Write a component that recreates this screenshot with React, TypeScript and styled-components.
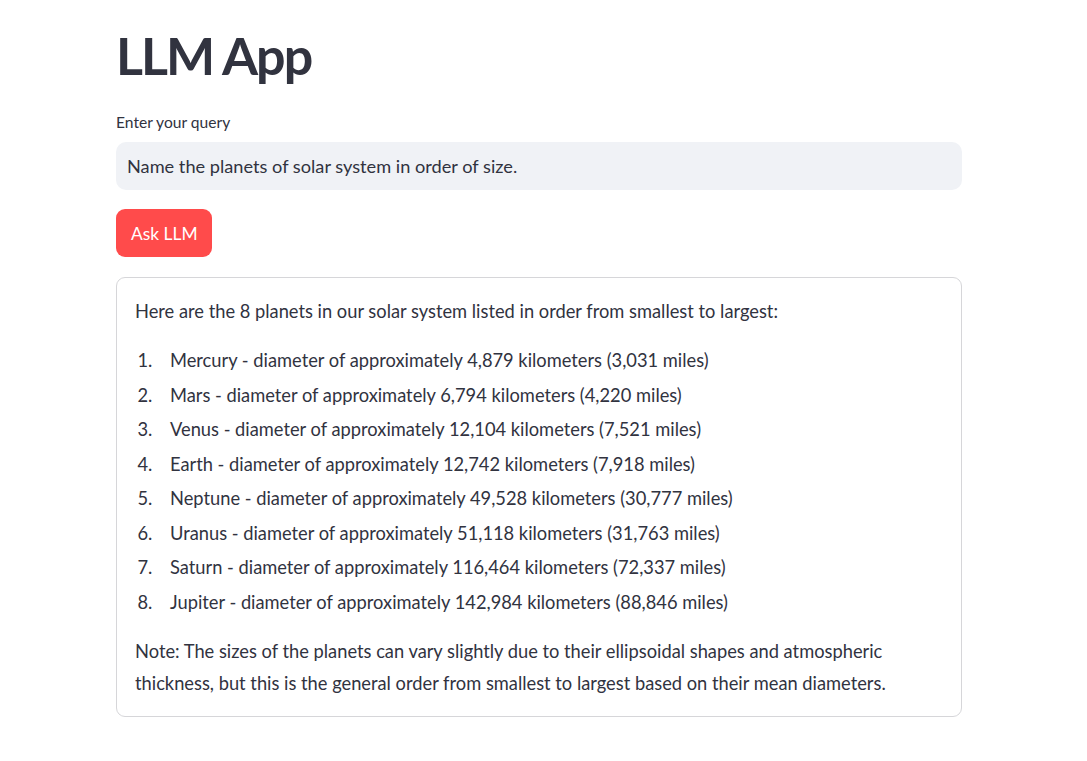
import styled, { createGlobalStyle } from 'styled-components'

const GlobalStyle = createGlobalStyle`
  html, body {
    margin: 0;
    padding: 0;
    background: #ffffff;
  }
  body {
    font-family: Lato, "Noto Sans", sans-serif;
    color: #31333f;
  }
`

const S = {
  Main: styled.main`
    width: 846px;
    margin: 0 auto 0 116px;
    padding-top: 24px;
  `,
  Title: styled.h1`
    margin: 0 0 26px;
    font-size: 52px;
    font-weight: 700;
    line-height: 1.2;
    letter-spacing: -2px;
  `,
  Label: styled.label`
    display: block;
    font-size: 15.6px;
    line-height: 20px;
    margin-bottom: 10px;
  `,
  Input: styled.input`
    display: block;
    box-sizing: border-box;
    width: 100%;
    height: 48px;
    border: none;
    outline: none;
    border-radius: 10px;
    background: #f0f2f6;
    padding: 0 11px;
    font-family: inherit;
    font-size: 18.2px;
    color: #31333f;
  `,
  Button: styled.button`
    display: block;
    margin-top: 19px;
    height: 48px;
    padding: 0 14px 0 15px;
    border: none;
    border-radius: 9px;
    background: #ff4b4b;
    color: #ffffff;
    font-family: inherit;
    font-size: 17.4px;
    cursor: pointer;
  `,
  Answer: styled.section`
    box-sizing: border-box;
    margin-top: 20px;
    border: 1px solid #d6d6d9;
    border-radius: 9px;
    padding: 17px 18px 0;
    font-size: 18.3px;
    line-height: 32px;
  `,
  Paragraph: styled.p`
    margin: 0 0 17px;
  `,
  List: styled.ol`
    margin: 0 0 17px;
    padding-left: 22px;
  `,
  Item: styled.li`
    padding-left: 13px;
    margin-bottom: 2.5px;
  `,
}

const planets = [
  'Mercury - diameter of approximately 4,879 kilometers (3,031 miles)',
  'Mars - diameter of approximately 6,794 kilometers (4,220 miles)',
  'Venus - diameter of approximately 12,104 kilometers (7,521 miles)',
  'Earth - diameter of approximately 12,742 kilometers (7,918 miles)',
  'Neptune - diameter of approximately 49,528 kilometers (30,777 miles)',
  'Uranus - diameter of approximately 51,118 kilometers (31,763 miles)',
  'Saturn - diameter of approximately 116,464 kilometers (72,337 miles)',
  'Jupiter - diameter of approximately 142,984 kilometers (88,846 miles)',
]

export default function App() {
  return (
    <>
      <GlobalStyle />
      <S.Main>
        <S.Title>LLM App</S.Title>
        <S.Label htmlFor="query">Enter your query</S.Label>
        <S.Input
          id="query"
          defaultValue="Name the planets of solar system in order of size."
        />
        <S.Button type="button">Ask LLM</S.Button>
        <S.Answer>
          <S.Paragraph>
            Here are the 8 planets in our solar system listed in order from
            smallest to largest:
          </S.Paragraph>
          <S.List>
            {planets.map((p) => (
              <S.Item key={p}>{p}</S.Item>
            ))}
          </S.List>
          <S.Paragraph>
            Note: The sizes of the planets can vary slightly due to their
            ellipsoidal shapes and atmospheric thickness, but this is the
            general order from smallest to largest based on their mean
            diameters.
          </S.Paragraph>
        </S.Answer>
      </S.Main>
    </>
  )
}
